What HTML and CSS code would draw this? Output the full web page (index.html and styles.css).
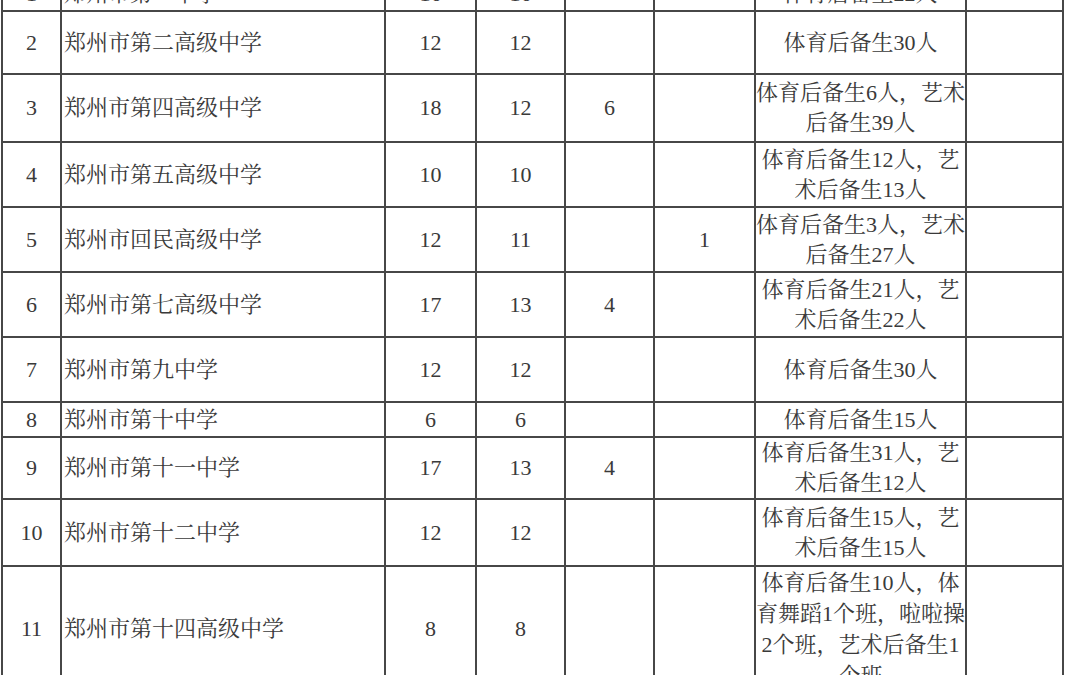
FILE: index.html
```html
<!DOCTYPE html>
<html lang="zh-CN">
<head>
<meta charset="utf-8">
<title>郑州市高级中学招生计划</title>
<link rel="stylesheet" href="styles.css">
</head>
<body>
<div class="sheet">
<table class="plan">
  <colgroup>
    <col class="c-no"><col class="c-name"><col class="c-n1"><col class="c-n2"><col class="c-n3"><col class="c-n4"><col class="c-note"><col class="c-extra">
  </colgroup>
  <tbody>
    <tr class="r1"><td class="no">1</td><td class="name">郑州市第一中学</td><td class="num">16</td><td class="num">16</td><td></td><td></td><td class="note">体育后备生22人</td><td></td></tr>
    <tr class="r2"><td class="no">2</td><td class="name">郑州市第二高级中学</td><td class="num">12</td><td class="num">12</td><td></td><td></td><td class="note">体育后备生30人</td><td></td></tr>
    <tr class="r3"><td class="no">3</td><td class="name">郑州市第四高级中学</td><td class="num">18</td><td class="num">12</td><td class="num">6</td><td></td><td class="note">体育后备生6人，艺术<br>后备生39人</td><td></td></tr>
    <tr class="r4"><td class="no">4</td><td class="name">郑州市第五高级中学</td><td class="num">10</td><td class="num">10</td><td></td><td></td><td class="note">体育后备生12人，艺<br>术后备生13人</td><td></td></tr>
    <tr class="r4"><td class="no">5</td><td class="name">郑州市回民高级中学</td><td class="num">12</td><td class="num">11</td><td></td><td class="num">1</td><td class="note">体育后备生3人，艺术<br>后备生27人</td><td></td></tr>
    <tr class="r4"><td class="no">6</td><td class="name">郑州市第七高级中学</td><td class="num">17</td><td class="num">13</td><td class="num">4</td><td></td><td class="note">体育后备生21人，艺<br>术后备生22人</td><td></td></tr>
    <tr class="r4"><td class="no">7</td><td class="name">郑州市第九中学</td><td class="num">12</td><td class="num">12</td><td></td><td></td><td class="note">体育后备生30人</td><td></td></tr>
    <tr class="r8"><td class="no">8</td><td class="name">郑州市第十中学</td><td class="num">6</td><td class="num">6</td><td></td><td></td><td class="note">体育后备生15人</td><td></td></tr>
    <tr class="r9"><td class="no">9</td><td class="name">郑州市第十一中学</td><td class="num">17</td><td class="num">13</td><td class="num">4</td><td></td><td class="note">体育后备生31人，艺<br>术后备生12人</td><td></td></tr>
    <tr class="r10"><td class="no">10</td><td class="name">郑州市第十二中学</td><td class="num">12</td><td class="num">12</td><td></td><td></td><td class="note">体育后备生15人，艺<br>术后备生15人</td><td></td></tr>
    <tr class="r11"><td class="no">11</td><td class="name">郑州市第十四高级中学</td><td class="num">8</td><td class="num">8</td><td></td><td></td><td class="note note-long">体育后备生10人，体<br>育舞蹈1个班，啦啦操<br>2个班，艺术后备生1<br>个班</td><td></td></tr>
  </tbody>
</table>
</div>
</body>
</html>
```

FILE: styles.css
```css
html, body {
  margin: 0;
  padding: 0;
  background: #ffffff;
  overflow: hidden;
}

.sheet {
  width: 1080px;
  height: 675px;
  overflow: hidden;
}

.plan {
  margin-top: -25px;
  margin-left: 1px;
  border-collapse: collapse;
  table-layout: fixed;
  width: 1062px;
  font-family: "Liberation Serif", "Noto Serif CJK SC", "Noto Sans CJK SC", serif;
  font-size: 22px;
  line-height: 30px;
  color: #3a3a3a;
}

.c-no { width: 59px; }
.c-name { width: 324px; }
.c-n1 { width: 91px; }
.c-n2 { width: 89px; }
.c-n3 { width: 89px; }
.c-n4 { width: 101px; }
.c-note { width: 211px; }
.c-extra { width: 97px; }

.plan td {
  border: 2px solid #474747;
  padding: 0;
  vertical-align: middle;
  white-space: nowrap;
  overflow: hidden;
}

.plan .no,
.plan .num,
.plan .note {
  text-align: center;
}

.plan .name {
  text-align: left;
  padding-left: 2px;
}

.plan .note-long {
  line-height: 31px;
}

.r1 { height: 35px; }
.r2 { height: 63px; }
.r3 { height: 68px; }
.r4 { height: 65px; }
.r8 { height: 35px; }
.r9 { height: 62px; }
.r10 { height: 67px; }
.r11 { height: 126px; }
```
